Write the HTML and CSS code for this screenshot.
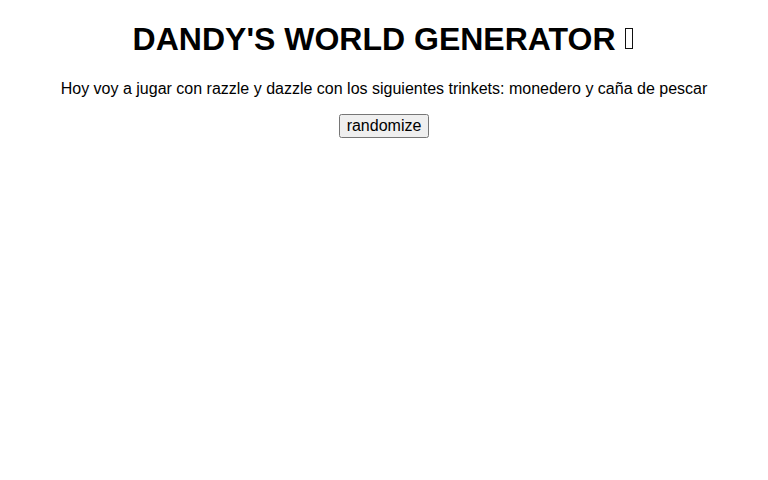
FILE: index.html
```html
<!DOCTYPE html>
<html lang="es">
<head>
    <meta charset="UTF-8">
    <meta name="viewport" content="width=device-width, initial-scale=1.0">
    <title>Dandy's World Generator</title>
    <link rel="stylesheet" href="styles.css">
</head>
<body>
    <h1>DANDY'S WORLD GENERATOR <span class="glyph" aria-hidden="true"></span></h1>
    <p id="result">Hoy voy a jugar con razzle y dazzle con los siguientes trinkets: monedero y caña de pescar</p>
    <div class="actions">
        <button id="randomize">randomize</button>
    </div>
</body>
</html>
```

FILE: styles.css
```css
body {
    font-family: 'Liberation Sans', Arial, sans-serif;
    text-align: center;
    background-color: #FFFFFF;
    color: #000000;
    margin: 0;
    padding: 0 8px;
}

h1 {
    font-size: 2em;
}

/* missing-glyph box after the title */
.glyph {
    display: inline-block;
    width: 6px;
    height: 19px;
    border: 1px solid #111;
    margin: 0 2px 1px 1px;
}

p {
    font-size: 16px;
}

button {
    font-family: 'Liberation Sans', Arial, sans-serif;
    font-size: 16px;
}
```
